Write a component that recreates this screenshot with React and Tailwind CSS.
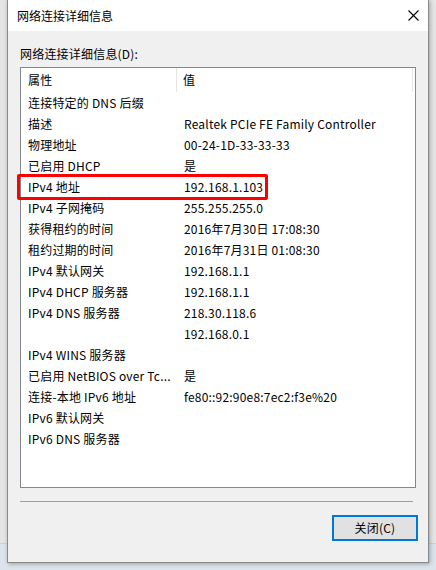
import React from "react";

const rows = [
  ["连接特定的 DNS 后缀", ""],
  ["描述", "Realtek PCIe FE Family Controller"],
  ["物理地址", "00-24-1D-33-33-33"],
  ["已启用 DHCP", "是"],
  ["IPv4 地址", "192.168.1.103"],
  ["IPv4 子网掩码", "255.255.255.0"],
  ["获得租约的时间", "2016年7月30日 17:08:30"],
  ["租约过期的时间", "2016年7月31日 01:08:30"],
  ["IPv4 默认网关", "192.168.1.1"],
  ["IPv4 DHCP 服务器", "192.168.1.1"],
  ["IPv4 DNS 服务器", "218.30.118.6"],
  ["", "192.168.0.1"],
  ["IPv4 WINS 服务器", ""],
  ["已启用 NetBIOS over Tc...", "是"],
  ["连接-本地 IPv6 地址", "fe80::92:90e8:7ec2:f3e%20"],
  ["IPv6 默认网关", ""],
  ["IPv6 DNS 服务器", ""],
];

const App = () => {
  return (
    <div
      className="relative w-[436px] h-[570px] overflow-hidden bg-[linear-gradient(to_bottom,#e4e4e4_543px,#c9d2dc_543px,#c9d2dc_544px,#dce3eb_544px)] text-[12px] tracking-[0.2px] text-black"
      style={{ fontFamily: '"Noto Sans CJK SC", "Noto Sans", sans-serif' }}
    >
      {/* dialog window */}
      <div className="ml-[7px] w-[422px] h-[563px] flex flex-col border-x border-b border-[#8a8a8a] bg-[#f0f0f0] shadow-[1px_1px_4px_rgba(0,0,0,0.3)]">
        {/* title bar */}
        <div className="h-[31px] bg-white flex items-center justify-between pl-[9px]">
          <span className="leading-none tracking-normal">网络连接详细信息</span>
          <svg width="11" height="11" viewBox="0 0 11 11" className="mr-[9px]">
            <path d="M0.5 0.5 L10.5 10.5 M10.5 0.5 L0.5 10.5" stroke="#000" strokeWidth="1.1" fill="none" />
          </svg>
        </div>

        {/* body */}
        <div className="flex-1 flex flex-col pl-[12px] pt-[15px]">
          <div className="h-[16px] leading-[16px]">网络连接详细信息(D):</div>

          <div className="mt-[5px] w-[396px] h-[421px] border border-[#828790] bg-white flex flex-col">
            {/* header */}
            <div className="h-[24px] flex items-center">
              <div className="w-[156px] h-full flex items-center pl-[7px] border-r border-[#e5e5e5]">属性</div>
              <div className="w-[236px] h-full flex items-center pl-[6px] border-r border-[#e5e5e5]">值</div>
            </div>
            {rows.map(([k, v], i) => (
              <div key={i} className="h-[21px] flex items-center whitespace-nowrap">
                <div className="w-[156px] pl-[7px]">{k}</div>
                <div className="pl-[7px]">{v}</div>
              </div>
            ))}
          </div>

          <div className="mt-[13px] w-[393px] h-px bg-[#a0a0a0]" />

          <div className="mt-[13px] w-[398px] flex justify-end">
            <button className="w-[86px] h-[26px] bg-[#e1e1e1] border-2 border-[#0078d7] flex items-center justify-center">
              关闭(C)
            </button>
          </div>
        </div>
      </div>

      {/* red highlight annotation */}
      <div className="absolute left-[17px] top-[174px] w-[251px] h-[26px] border-[3px] border-[#ff0000] rounded-[2px]" />
    </div>
  );
};

export default App;
